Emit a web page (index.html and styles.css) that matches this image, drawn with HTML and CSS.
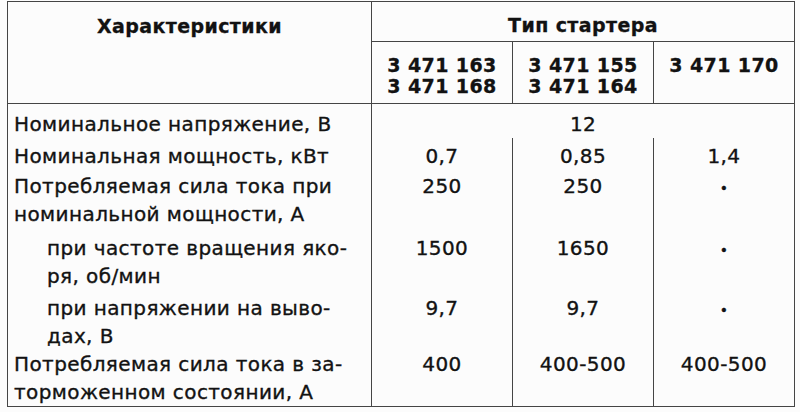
FILE: index.html
```html
<!DOCTYPE html>
<html lang="ru">
<head>
<meta charset="utf-8">
<title>Характеристики стартеров</title>
<link rel="stylesheet" href="styles.css">
</head>
<body>
<table class="spec">
  <colgroup>
    <col class="c-name">
    <col class="c-val">
    <col class="c-val">
    <col class="c-val">
  </colgroup>
  <thead>
    <tr class="h1">
      <th rowspan="2" class="h-name">Характеристики</th>
      <th colspan="3" class="h-type">Тип стартера</th>
    </tr>
    <tr class="h2">
      <th class="h-model">3 471 163<br>3 471 168</th>
      <th class="h-model">3 471 155<br>3 471 164</th>
      <th class="h-model">3 471 170</th>
    </tr>
  </thead>
  <tbody>
    <tr class="r1">
      <td class="name">Номинальное напряжение, В</td>
      <td colspan="3" class="val span">12</td>
    </tr>
    <tr class="r2">
      <td class="name">Номинальная мощность, кВт</td>
      <td class="val">0,7</td>
      <td class="val">0,85</td>
      <td class="val">1,4</td>
    </tr>
    <tr class="r3">
      <td class="name">Потребляемая сила тока при<br>номинальной мощности, А</td>
      <td class="val">250</td>
      <td class="val">250</td>
      <td class="val"><span class="dot">•</span></td>
    </tr>
    <tr class="r4">
      <td class="name sub">при частоте вращения яко-<br>ря, об/мин</td>
      <td class="val">1500</td>
      <td class="val">1650</td>
      <td class="val"><span class="dot">•</span></td>
    </tr>
    <tr class="r5">
      <td class="name sub">при напряжении на выво-<br>дах, В</td>
      <td class="val">9,7</td>
      <td class="val">9,7</td>
      <td class="val"><span class="dot">•</span></td>
    </tr>
    <tr class="r6">
      <td class="name">Потребляемая сила тока в за-<br>торможенном состоянии, А</td>
      <td class="val">400</td>
      <td class="val">400-500</td>
      <td class="val">400-500</td>
    </tr>
  </tbody>
</table>
</body>
</html>
```
FILE: styles.css
```css
html, body {
  margin: 0;
  padding: 0;
  background: #fcfcfc;
}

body {
  width: 800px;
  height: 412px;
  overflow: hidden;
  font-family: "DejaVu Sans", "Liberation Sans", sans-serif;
  color: #121212;
}

.spec {
  margin: 1px 0 0 7px;
  border-collapse: collapse;
  table-layout: fixed;
  width: 788px;
  border: 1px solid #454545;
}

.c-name { width: 364px; }
.c-val { width: 141px; }

th {
  font-weight: bold;
  font-size: 19px;
  letter-spacing: 0.4px;
  padding: 0;
  text-align: center;
  vertical-align: top;
  border: 1px solid #454545;
  -webkit-text-stroke: 0.3px #121212;
}

.h1 { height: 40px; }

.h-name {
  padding-top: 9px;
  line-height: 30px;
}

.h-type {
  padding-top: 8px;
  line-height: 30px;
}

.h-model {
  padding: 13px 0 6px;
  line-height: 21px;
}

td {
  padding: 0;
  font-size: 20px;
  letter-spacing: 0.4px;
  line-height: 28px;
  vertical-align: top;
  white-space: nowrap;
  -webkit-text-stroke: 0.35px #121212;
}

.val {
  text-align: center;
  border-left: 1px solid #454545;
}

.val.span {
  text-align: center;
}

.name {
  padding-left: 6px;
}

.name.sub {
  padding-left: 39px;
}

.r1 td { padding-top: 6px; }
.r2 td { padding-top: 4px; }
.r3 td { padding-top: 2px; }
.r4 td { padding-top: 6px; }
.r5 td { padding-top: 4px; }
.r6 td { padding-top: 0; }

.dot {
  font-size: 14px;
}
```
